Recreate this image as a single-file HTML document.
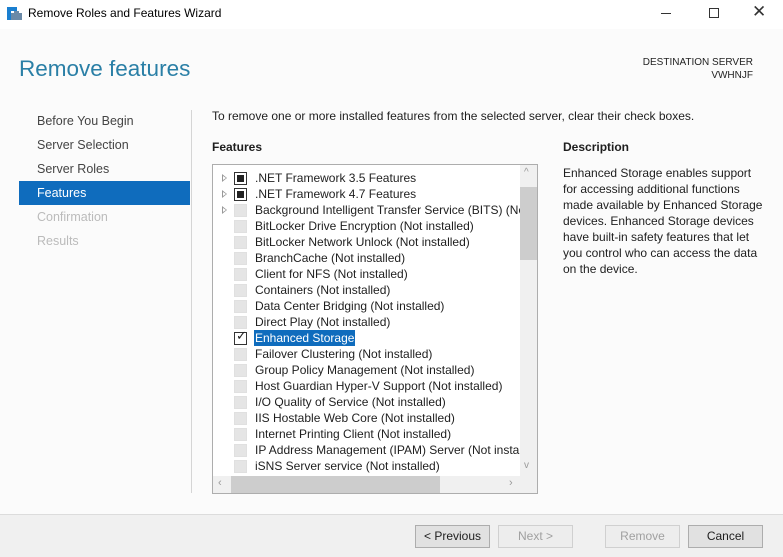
<!DOCTYPE html><html><head><style>
*{margin:0;padding:0;box-sizing:border-box}
body{width:783px;height:557px;position:relative;background:#fbfbfb;font-family:"Liberation Sans",sans-serif;font-size:12px;color:#1e1e1e;overflow:hidden}
.a{position:absolute;white-space:nowrap}
.nav{position:absolute;left:19px;width:171px;height:24px;line-height:24px;padding-left:18px;font-size:12.5px;color:#444}
.row{position:absolute;left:0;height:16px;line-height:16px;font-size:12px}
.cb{position:absolute;left:21px;top:2px;width:13px;height:13px;background:#e5e5e5;border:1px solid #e0e0e0}
.cb.p{border:1px solid #333;background:#fff}
.cb.p:after{content:"";position:absolute;left:2px;top:2px;width:7px;height:7px;background:#222}
.cb.c{border:1px solid #333;background:#fff}
.t{position:absolute;left:42px}
.ex{position:absolute;left:9px;top:4px;width:0;height:0;border-left:5px solid #999;border-top:4px solid transparent;border-bottom:4px solid transparent}
.ex:after{content:"";position:absolute;left:-4px;top:-2px;border-left:3px solid #fff;border-top:2px solid transparent;border-bottom:2px solid transparent}
.btn{position:absolute;top:525px;height:23px;width:75px;border:1px solid #adadad;background:#e1e1e1;text-align:center;line-height:21px;font-size:12px}
.btn.d{color:#a0a0a0;border-color:#d0d0d0;background:#ededed}
</style></head><body>
<div class="a" style="left:0;top:0;width:783px;height:29px;background:#fff"></div>
<svg class="a" style="left:7px;top:7px" width="16" height="14"><rect x="0" y="0" width="4" height="13" fill="#1a7fd0"/><rect x="0" y="0" width="10" height="4" fill="#1a7fd0"/><rect x="4" y="6" width="11" height="7" fill="#6b8aa8"/><rect x="7" y="4" width="5" height="2" fill="#6b8aa8"/></svg>
<div class="a" style="left:28px;top:6px;font-size:12px;color:#000">Remove Roles and Features Wizard</div>
<div class="a" style="left:661px;top:13px;width:10px;height:1px;background:#333"></div>
<div class="a" style="left:709px;top:8px;width:10px;height:10px;border:1px solid #333"></div>
<div class="a" style="left:752px;top:2px;font-size:17px;color:#333">✕</div>
<div class="a" style="left:19px;top:56px;font-size:22.5px;color:#2a7fa6">Remove features</div>
<div class="a" style="right:30px;top:56px;font-size:10px;text-align:right;line-height:13px;color:#222">DESTINATION SERVER<br>VWHNJF</div>
<div class="nav" style="top:109px">Before You Begin</div>
<div class="nav" style="top:133px">Server Selection</div>
<div class="nav" style="top:157px">Server Roles</div>
<div class="nav" style="top:181px;background:#0f6cbd;color:#fff">Features</div>
<div class="nav" style="top:205px;color:#bbb">Confirmation</div>
<div class="nav" style="top:229px;color:#bbb">Results</div>
<div class="a" style="left:191px;top:110px;width:1px;height:383px;background:#d5d5d5"></div>
<div class="a" style="left:212px;top:109px;font-size:12px">To remove one or more installed features from the selected server, clear their check boxes.</div>
<div class="a" style="left:212px;top:140px;font-weight:bold;font-size:12px">Features</div>
<div class="a" style="left:563px;top:140px;font-weight:bold;font-size:12px">Description</div>
<div class="a" style="left:563px;top:165px;width:200px;white-space:normal;line-height:16px;font-size:12px">Enhanced Storage enables support for accessing additional functions made available by Enhanced Storage devices. Enhanced Storage devices have built-in safety features that let you control who can access the data on the device.</div>
<div class="a" style="left:212px;top:164px;width:326px;height:330px;border:1px solid #adadad;background:#fff;overflow:hidden">
<div style="position:absolute;left:0;top:5px;width:307px;height:306px;overflow:hidden">
<div class="row" style="top:0"><i class="ex"></i><i class="cb p"></i><span class="t">.NET Framework 3.5 Features</span></div>
<div class="row" style="top:16px"><i class="ex"></i><i class="cb p"></i><span class="t">.NET Framework 4.7 Features</span></div>
<div class="row" style="top:32px"><i class="ex"></i><i class="cb"></i><span class="t">Background Intelligent Transfer Service (BITS) (Not installed)</span></div>
<div class="row" style="top:48px"><i class="cb"></i><span class="t">BitLocker Drive Encryption (Not installed)</span></div>
<div class="row" style="top:64px"><i class="cb"></i><span class="t">BitLocker Network Unlock (Not installed)</span></div>
<div class="row" style="top:80px"><i class="cb"></i><span class="t">BranchCache (Not installed)</span></div>
<div class="row" style="top:96px"><i class="cb"></i><span class="t">Client for NFS (Not installed)</span></div>
<div class="row" style="top:112px"><i class="cb"></i><span class="t">Containers (Not installed)</span></div>
<div class="row" style="top:128px"><i class="cb"></i><span class="t">Data Center Bridging (Not installed)</span></div>
<div class="row" style="top:144px"><i class="cb"></i><span class="t">Direct Play (Not installed)</span></div>
<div class="row" style="top:160px"><i class="cb c"></i><span style="position:absolute;left:23px;top:-2px;font-size:13px">✓</span><span class="t" style="background:#0f6cbd;color:#fff;padding:0 1px;left:41px">Enhanced Storage</span></div>
<div class="row" style="top:176px"><i class="cb"></i><span class="t">Failover Clustering (Not installed)</span></div>
<div class="row" style="top:192px"><i class="cb"></i><span class="t">Group Policy Management (Not installed)</span></div>
<div class="row" style="top:208px"><i class="cb"></i><span class="t">Host Guardian Hyper-V Support (Not installed)</span></div>
<div class="row" style="top:224px"><i class="cb"></i><span class="t">I/O Quality of Service (Not installed)</span></div>
<div class="row" style="top:240px"><i class="cb"></i><span class="t">IIS Hostable Web Core (Not installed)</span></div>
<div class="row" style="top:256px"><i class="cb"></i><span class="t">Internet Printing Client (Not installed)</span></div>
<div class="row" style="top:272px"><i class="cb"></i><span class="t">IP Address Management (IPAM) Server (Not installed)</span></div>
<div class="row" style="top:288px"><i class="cb"></i><span class="t">iSNS Server service (Not installed)</span></div>
</div>
<div style="position:absolute;left:307px;top:0;width:17px;height:311px;background:#f0f0f0"></div>
<div style="position:absolute;left:307px;top:22px;width:17px;height:73px;background:#cdcdcd"></div>
<div style="position:absolute;left:311px;top:2px;color:#999;font-size:10px">^</div>
<div style="position:absolute;left:311px;top:295px;color:#999;font-size:10px">v</div>
<div style="position:absolute;left:0;top:311px;width:324px;height:17px;background:#f0f0f0"></div>
<div style="position:absolute;left:18px;top:311px;width:209px;height:17px;background:#cdcdcd"></div>
<div style="position:absolute;left:5px;top:312px;color:#999;font-size:11px">‹</div>
<div style="position:absolute;left:296px;top:312px;color:#999;font-size:11px">›</div>
</div>
<div class="a" style="left:0;top:514px;width:783px;height:43px;background:#f0f0f0;border-top:1px solid #dcdcdc"></div>
<div class="btn" style="left:415px">&lt; Previous</div>
<div class="btn d" style="left:498px">Next &gt;</div>
<div class="btn d" style="left:605px">Remove</div>
<div class="btn" style="left:688px">Cancel</div>
</body></html>
